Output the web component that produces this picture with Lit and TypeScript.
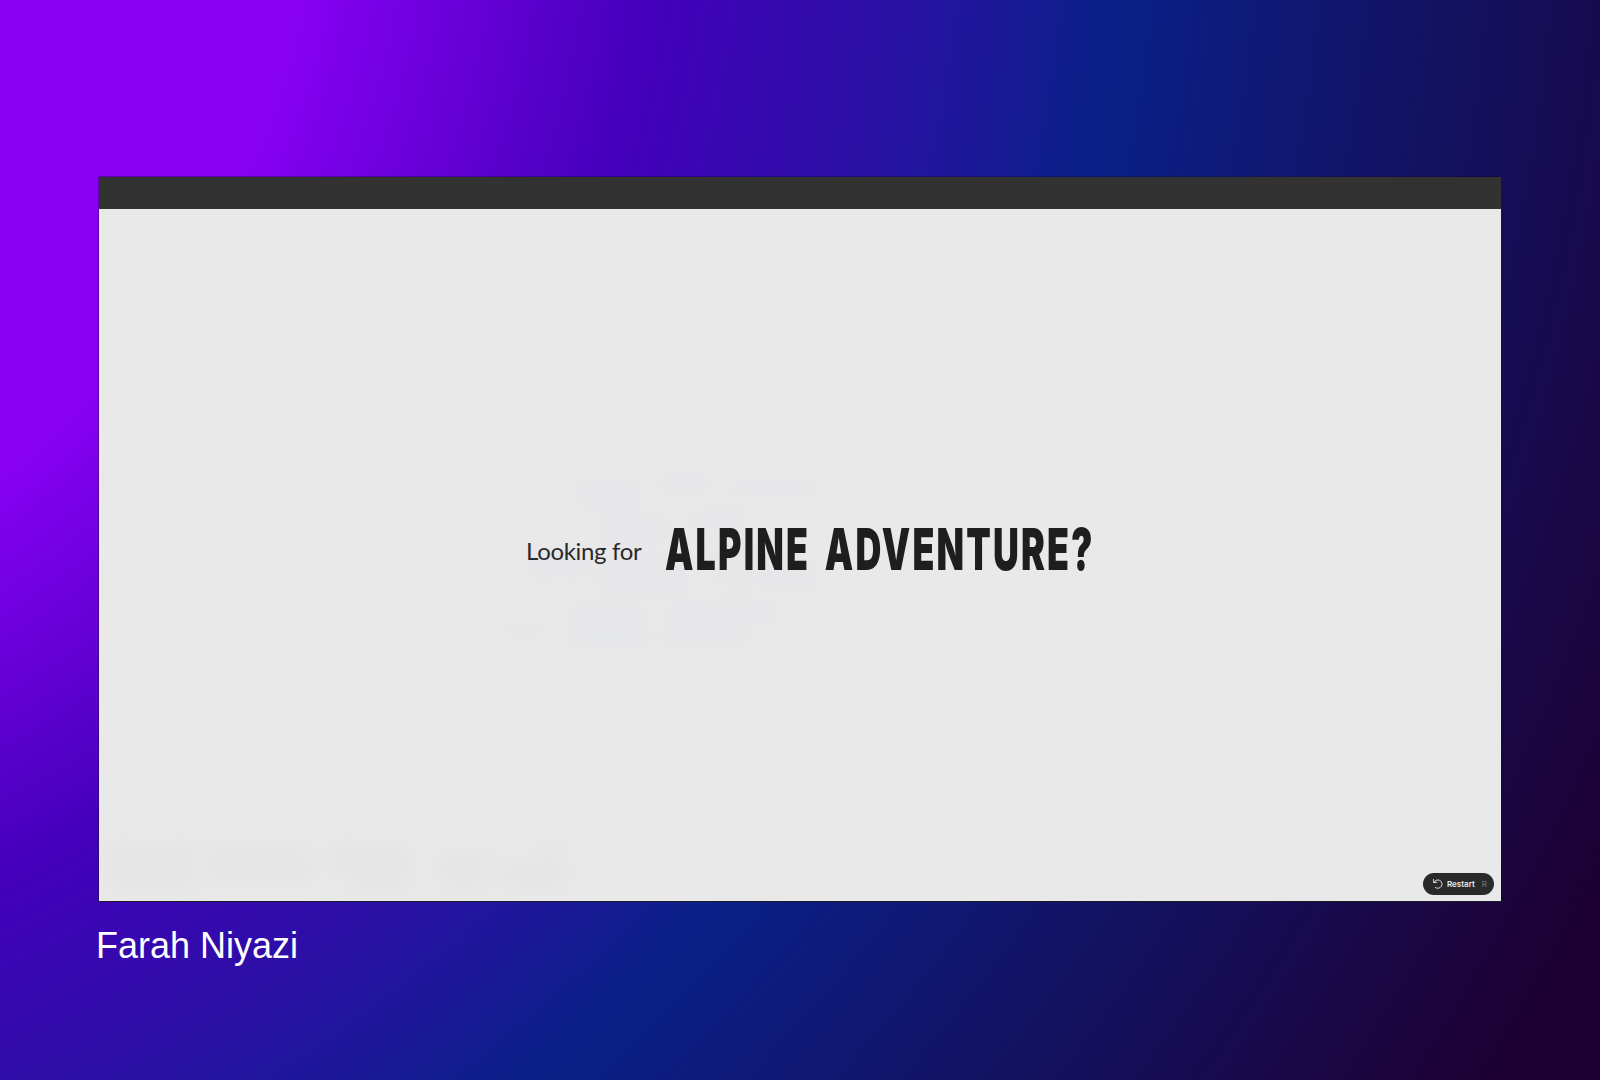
import { LitElement, html, css, svg } from "lit";
import { customElement } from "lit/decorators.js";

const blots: [number, number, number, number][] = [
  [480, 270, 60, 30], [560, 262, 50, 22], [630, 270, 90, 18], [500, 305, 70, 28], [590, 300, 60, 20],
  [430, 340, 60, 30], [500, 345, 90, 40], [610, 335, 60, 40], [670, 350, 50, 30],
  [470, 395, 80, 25], [570, 392, 110, 22], [405, 412, 40, 16], [470, 420, 80, 18], [560, 420, 90, 16],
];
const lows: [number, number, number, number][] = [
  [8, 632, 90, 50], [105, 636, 110, 40], [230, 632, 80, 36], [250, 660, 60, 24], [340, 640, 50, 40], [400, 650, 70, 30], [440, 632, 30, 14],
];

@customElement("app-root")
export class AppRoot extends LitElement {
  static styles = css`
    :host {
      display: block;
      height: 1080px;
      overflow: hidden;
      box-sizing: border-box;
      padding: 176px 99px 0 98px;
      background: radial-gradient(circle 2339px at -482px -162px, #8700f2 800px, #4400bb 1143px, #2a10a5 1378px, #0a2088 1602px, #1e0032 2339px);
      font-family: "Liberation Sans", Arial, sans-serif;
    }
    .frame {
      width: 1403px;
      height: 726px;
      box-sizing: border-box;
      display: flex;
      flex-direction: column;
      border: 1px solid rgba(20, 10, 50, 0.35);
      border-width: 1px 0 1px 1px;
      border-bottom-color: #1c1c24;
    }
    .bar {
      height: 32px;
      flex: none;
      background: #323232;
    }
    .slide {
      position: relative;
      flex: 1;
      background: #e9e9ea;
      overflow: hidden;
      display: flex;
      align-items: flex-start;
      padding: 323px 0 0 427px;
    }
    .ghost {
      position: absolute;
      inset: 0;
      width: 100%;
      height: 100%;
    }
    .row {
      position: relative;
      display: flex;
      align-items: flex-start;
    }
    .lead {
      font-family: "Lato", sans-serif;
      font-weight: 400;
      font-size: 24px;
      line-height: 28px;
      letter-spacing: -0.32px;
      margin-top: 5px;
      width: 139px;
      flex: none;
      color: #2a2a2a;
      white-space: nowrap;
    }
    .head {
      width: 427px;
      flex: none;
      margin-top: -8px;
      font-family: "Inter", sans-serif;
      font-weight: 900;
      font-size: 58px;
      line-height: 50px;
      color: #1e1e1e;
      white-space: nowrap;
      letter-spacing: 3.5px;
      word-spacing: 9px;
      transform: scaleX(0.617);
      transform-origin: left center;
    }
    .pill {
      position: absolute;
      right: 7px;
      bottom: 6px;
      width: 71px;
      height: 22px;
      box-sizing: border-box;
      border-radius: 11px;
      background: #2a2a2a;
      display: flex;
      align-items: center;
      padding-left: 9px;
      gap: 3px;
      color: #ececec;
      font-family: "Inter", sans-serif;
      font-size: 8px;
      font-weight: 600;
    }
    .pill svg {
      flex: none;
    }
    .key {
      color: #6f6f6f;
      margin-left: 4px;
      font-weight: 500;
    }
    .name {
      margin: 24px 0 0 -2px;
      font-size: 36px;
      line-height: 40px;
      color: #ffffff;
    }
  `;

  render() {
    return html`
      <div class="frame">
        <div class="bar"></div>
        <div class="slide">
          <svg class="ghost" viewBox="0 0 1402 692" aria-hidden="true">
            <defs>
              <filter id="b" x="-30%" y="-30%" width="160%" height="160%">
                <feGaussianBlur stdDeviation="8"></feGaussianBlur>
              </filter>
            </defs>
            <g filter="url(#b)" fill="#e4e5e8" opacity="0.6">
              ${blots.map(([x, y, w, h]) => svg`<rect x=${x} y=${y} width=${w} height=${h}></rect>`)}
            </g>
            <g filter="url(#b)" fill="#e4e4e5" opacity="0.7">
              ${lows.map(([x, y, w, h]) => svg`<rect x=${x} y=${y} width=${w} height=${h}></rect>`)}
            </g>
          </svg>
          <div class="row">
            <div class="lead">Looking for</div>
            <div class="head">ALPINE ADVENTURE?</div>
          </div>
          <div class="pill">
            <svg width="12" height="12" viewBox="0 0 12 12" fill="none" stroke="#ececec" stroke-width="0.9" stroke-linecap="round" stroke-linejoin="round">
              <path d="M1.5 1.5 L1.8 4.6 L4.8 4.2"></path>
              <path d="M1.9 4.5 A4.2 4.2 0 1 1 3.4 9.6"></path>
            </svg>
            <span>Restart</span><span class="key">R</span>
          </div>
        </div>
      </div>
      <div class="name">Farah Niyazi</div>
    `;
  }
}
